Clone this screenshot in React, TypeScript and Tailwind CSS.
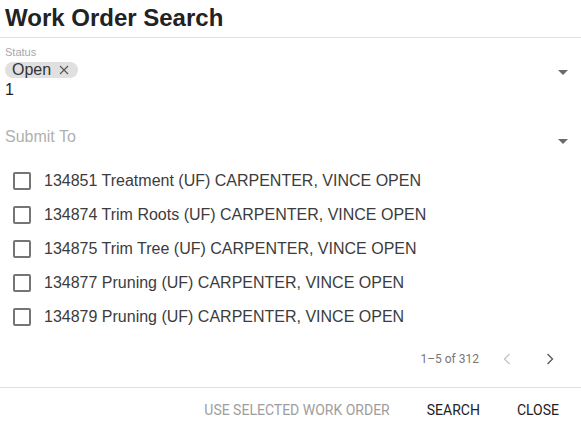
import React from 'react';

const rows = [
  '134851 Treatment (UF) CARPENTER, VINCE OPEN',
  '134874 Trim Roots (UF) CARPENTER, VINCE OPEN',
  '134875 Trim Tree (UF) CARPENTER, VINCE OPEN',
  '134877 Pruning (UF) CARPENTER, VINCE OPEN',
  '134879 Pruning (UF) CARPENTER, VINCE OPEN',
];

function Caret() {
  return (
    <svg width="10" height="5" viewBox="0 0 10 5" className="shrink-0">
      <path d="M0 0h10L5 5z" fill="#6b6b6b" />
    </svg>
  );
}

export default function App() {
  return (
    <div className="h-[433px] w-[581px] overflow-hidden bg-white font-['Liberation_Sans',Arial,sans-serif] text-[#333]">
      <h1 className="h-[38px] border-b border-[#e0e0e0] pl-[5px] pt-[4px] text-[24px] font-bold leading-[28px] text-[#222]">
        Work Order Search
      </h1>

      {/* Status select */}
      <div className="flex items-center pl-[5px] pr-[13px] pt-[8px]">
        <div className="flex-1">
          <div className="text-[11px] leading-[12px] text-[#a8a8a8]">Status</div>
          <span className="mt-[2px] inline-flex h-[16px] items-center rounded-full bg-[#e0e0e0] pl-[7px] pr-[9px] text-[16px] leading-[16px] text-[#333]">
            Open
            <svg width="10" height="10" viewBox="0 0 10 10" className="ml-[8px]">
              <path d="M1 1l8 8M9 1l-8 8" stroke="#555" strokeWidth="1.1" />
            </svg>
          </span>
          <div className="-mt-[1px] text-[16px] leading-[18px] text-[#222]">1</div>
        </div>
        <Caret />
      </div>

      {/* Submit To select */}
      <div className="mt-[28px] flex items-end pl-[5px] pr-[13px]">
        <div className="flex-1 text-[16px] leading-[20px] text-[#b0b0b0]">Submit To</div>
        <div className="pb-[3px]">
          <Caret />
        </div>
      </div>

      <div className="mt-[17px] flex flex-col">
        {rows.map((r) => (
          <label key={r} className="flex h-[34px] items-center pl-[13px]">
            <span className="h-[18px] w-[18px] shrink-0 rounded-[2px] border-2 border-[#757575]" />
            <span className="ml-[13px] text-[16px] leading-[18px] text-[#3c3c3c]">{r}</span>
          </label>
        ))}
      </div>

      <div className="mt-[10px] flex h-[30px] items-center justify-end pr-[27px] font-['Roboto',sans-serif] text-[12px] text-[#777]">
        <span>1–5 of 312</span>
        <svg width="8" height="12" viewBox="0 0 8 12" className="ml-[24px]">
          <path d="M6.5 1L1.5 6l5 5" fill="none" stroke="#c4c4c4" strokeWidth="1.3" />
        </svg>
        <svg width="8" height="12" viewBox="0 0 8 12" className="ml-[35px]">
          <path d="M1.5 1l5 5-5 5" fill="none" stroke="#555" strokeWidth="1.3" />
        </svg>
      </div>

      <div className="mt-[13px] flex h-[46px] items-center justify-end border-t border-[#e0e0e0] pr-[22px] font-['Roboto',sans-serif] text-[14px]">
        <button className="uppercase text-[#9e9e9e]">Use Selected Work Order</button>
        <button className="ml-[37px] uppercase text-[#222]">Search</button>
        <button className="ml-[37px] uppercase text-[#222]">Close</button>
      </div>
    </div>
  );
}
